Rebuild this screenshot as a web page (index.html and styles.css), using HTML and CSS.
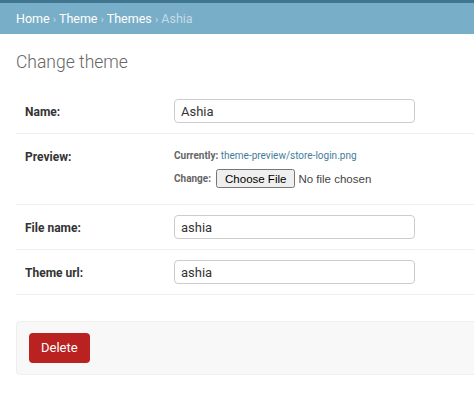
FILE: index.html
```html
<!DOCTYPE html>
<html lang="en">
<head>
    <meta charset="UTF-8">
    <meta name="viewport" content="width=device-width, initial-scale=1.0">
    <title>Change theme | Django site admin</title>
    <link rel="stylesheet" href="styles.css">
</head>
<body>
    <div class="header"></div>
    <div class="breadcrumbs">
        <a href="#">Home</a> <span class="sep">&rsaquo;</span>
        <a href="#">Theme</a> <span class="sep">&rsaquo;</span>
        <a href="#">Themes</a> <span class="sep">&rsaquo;</span>
        <span class="current">Ashia</span>
    </div>

    <div class="content">
        <h1>Change theme</h1>
        <form class="change-form">
            <fieldset class="module aligned">
                <div class="form-row">
                    <label for="id_name">Name:</label>
                    <input type="text" id="id_name" class="vTextField" value="Ashia">
                </div>
                <div class="form-row">
                    <label for="id_preview">Preview:</label>
                    <div class="file-upload">
                        <p class="currently">Currently: <a href="#">theme-preview/store-login.png</a></p>
                        <p class="change">Change: <input type="file" id="id_preview"></p>
                    </div>
                </div>
                <div class="form-row">
                    <label for="id_file_name">File name:</label>
                    <input type="text" id="id_file_name" class="vTextField" value="ashia">
                </div>
                <div class="form-row">
                    <label for="id_theme_url">Theme url:</label>
                    <input type="text" id="id_theme_url" class="vTextField" value="ashia">
                </div>
            </fieldset>

            <div class="submit-row">
                <a href="#" class="deletelink">Delete</a>
            </div>
        </form>
    </div>
</body>
</html>
```

FILE: styles.css
```css
body {
    margin: 0;
    font-family: Roboto, "Liberation Sans", Arial, sans-serif;
    color: #333;
    background: #fff;
    overflow-x: hidden;
}
a {
    text-decoration: none;
}
.header {
    height: 3px;
    background-color: #417690;
}
.breadcrumbs {
    height: 31px;
    line-height: 31px;
    padding: 0 16px;
    background-color: #79aec8;
    color: #c4dce8;
    font-size: 12.5px;
}
.breadcrumbs a {
    color: #fff;
}
.breadcrumbs .sep {
    font-size: 11px;
}
.content {
    padding: 17px 0 0 16px;
}
h1 {
    margin: 0 0 16px;
    font-size: 17.5px;
    line-height: 22px;
    font-weight: 300;
    color: #666;
}
.change-form {
    margin-right: -20px;
}
fieldset {
    margin: 0;
    padding: 0;
    border: none;
}
.form-row {
    display: flex;
    align-items: flex-start;
    padding: 10px 9px;
    border-bottom: 1px solid #eee;
}
.form-row label {
    width: 149px;
    flex-shrink: 0;
    padding-top: 6px;
    font-size: 12px;
    font-weight: bold;
    color: #333;
}
.vTextField {
    width: 241px;
    height: 24px;
    box-sizing: border-box;
    padding: 2px 6px;
    border: 1px solid #ccc;
    border-radius: 4px;
    font-family: Roboto, "Liberation Sans", Arial, sans-serif;
    font-size: 13px;
    color: #333;
    margin: 0;
}
.file-upload p {
    margin: 0;
    font-size: 10px;
    font-weight: bold;
    color: #666;
}
.file-upload .currently {
    margin-top: 4px;
    line-height: 16px;
}
.file-upload .currently a {
    font-weight: normal;
    color: #447e9b;
}
.file-upload .change {
    margin: 5px 0 6px;
    height: 19px;
    display: flex;
    align-items: center;
    gap: 5px;
}
.file-upload input[type="file"] {
    height: 19px;
    font-family: "Liberation Sans", Arial, sans-serif;
    font-size: 11.5px;
    font-weight: normal;
    color: #444;
}
.file-upload input[type="file"]::file-selector-button {
    height: 19px;
    padding: 0 7px;
    margin-right: 3px;
    font-family: "Liberation Sans", Arial, sans-serif;
    font-size: 11.5px;
}
.submit-row {
    margin-top: 26px;
    padding: 11px 12px;
    background-color: #f8f8f8;
    border: 1px solid #eee;
    border-radius: 4px;
}
.deletelink {
    display: inline-block;
    height: 30px;
    line-height: 30px;
    padding: 0 12px;
    background-color: #ba2121;
    color: #fff;
    border-radius: 4px;
    font-size: 13px;
}
```
